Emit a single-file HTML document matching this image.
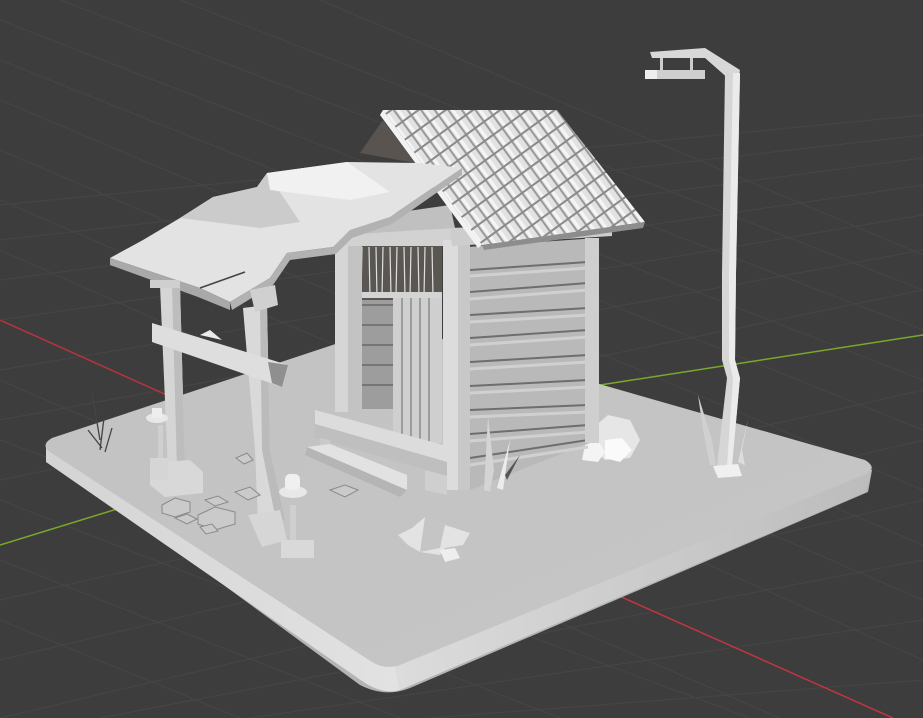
<!DOCTYPE html>
<html><head><meta charset="utf-8"><style>
html,body{margin:0;padding:0;background:#3d3d3d;overflow:hidden;width:923px;height:718px}
svg{display:block}
</style></head><body>
<svg width="923" height="718" viewBox="0 0 923 718" xmlns="http://www.w3.org/2000/svg">
<defs>
<linearGradient id="plat" x1="0" y1="0" x2="1" y2="1">
<stop offset="0" stop-color="#c2c2c2"/><stop offset="1" stop-color="#c6c6c6"/></linearGradient>
<linearGradient id="sideL" x1="0" y1="0" x2="1" y2="0">
<stop offset="0" stop-color="#d4d4d4"/><stop offset="1" stop-color="#e2e2e2"/></linearGradient>
<linearGradient id="sideR" x1="0" y1="0" x2="1" y2="0">
<stop offset="0" stop-color="#dcdcdc"/><stop offset="1" stop-color="#bcbcbc"/></linearGradient>
<pattern id="tiles" width="11" height="16" patternUnits="userSpaceOnUse" patternTransform="rotate(-36)">
<rect width="11" height="16" fill="#e2e2e2"/>
<rect x="0" y="0" width="2" height="16" fill="#9a9a9a"/>
<rect x="3" y="0" width="3" height="16" fill="#f5f5f5"/>
<rect x="0" y="14" width="11" height="2" fill="#8a8a8a"/>
</pattern>
</defs>
<rect width="923" height="718" fill="#3d3d3d"/>
<g stroke="#464646" stroke-width="1" fill="none">
<path d="M0 250 L923 660 M0 200 L923 600 M0 150 L923 545 M0 380 L923 780 M0 440 L750 718 M0 500 L560 718 M0 560 L400 718 M0 620 L240 718 M0 100 L923 490 M0 60 L923 430 M0 20 L923 380 M60 0 L923 330 M180 0 L923 290 M320 0 L923 255"/>
<path d="M0 600 L923 390 M0 660 L923 440 M0 718 L923 500 M100 718 L923 560 M250 718 L923 620 M430 718 L923 680 M0 480 L923 290 M0 420 L923 250 M0 370 L923 215 M0 320 L923 185 M0 280 L923 158 M0 240 L923 135 M0 205 L923 115"/>
</g>
<path d="M0 320 L200 410" stroke="#b8333f" stroke-width="1.5"/>
<path d="M590 583 L893 718" stroke="#c23542" stroke-width="1.5"/>
<path d="M0 545 L130 505" stroke="#7aa82a" stroke-width="1.5"/>
<path d="M600 385 L923 335" stroke="#7aa82a" stroke-width="1.5"/>
<!-- platform -->
<path d="M46 445 L60 465 L360 685 Q385 698 410 688 L868 492 L872 470 Z" fill="#b4b4b4"/>
<path d="M46 445 L46 462 L365 683 Q385 695 400 690 L395 665 Z" fill="url(#sideL)"/>
<path d="M395 665 L400 690 L866 492 L872 470 Z" fill="url(#sideR)"/>
<path d="M52 438 L393 325 L865 460 Q878 468 866 474 L400 665 Q385 670 372 662 L50 452 Q40 445 52 438 Z" fill="url(#plat)"/>
<!-- lamp post -->
<path d="M650 52 L705 48 L740 70 L738 80 L730 80 L705 58 L652 58 Z" fill="#d8d8d8"/>
<rect x="645" y="70" width="60" height="9" fill="#cfcfcf"/>
<rect x="645" y="70" width="12" height="9" fill="#eee"/>
<rect x="660" y="58" width="3" height="12" fill="#ccc"/><rect x="690" y="58" width="3" height="12" fill="#ccc"/>
<path d="M725 73 L740 73 L736 273 L735 360 L740 378 L732 466 L717 466 L727 378 L722 360 L722 273 Z" fill="#d6d6d6"/>
<path d="M733 73 L740 73 L736 273 L735 360 L740 378 L732 466 L727 466 L733 378 L729 360 L729 273 Z" fill="#ebebeb"/>
<path d="M698 395 L712 440 L716 465 L710 465 L703 430 Z" fill="#d0d0d0"/>
<path d="M748 420 L742 450 L745 465 L738 462 Z" fill="#ddd"/>
<path d="M713 466 L738 464 L742 476 L718 478 Z" fill="#f0f0f0"/>
<!-- rocks right -->
<path d="M593 428 L608 415 L630 420 L640 440 L630 458 L605 460 L595 450 Z" fill="#e6e6e6"/>
<path d="M585 445 L598 440 L605 452 L598 462 L582 460 Z" fill="#f4f4f4"/>
<path d="M605 440 L622 438 L632 450 L620 462 L605 458 Z" fill="#fafafa"/>
<!-- house right wall -->
<path d="M467 247 L598 238 L596 440 L470 490 Z" fill="#b9b9b9"/>
<g stroke="#6e6e6e" stroke-width="2">
<path d="M470 270 L588 262 M470 292 L588 283 M470 315 L588 308 M470 338 L588 330 M470 362 L588 355 M470 386 L588 380 M470 410 L588 405 M470 434 L588 425 M470 458 L588 440"/>
</g>
<g stroke="#d0d0d0" stroke-width="3">
<path d="M470 276 L588 268 M470 299 L588 290 M470 322 L588 315 M470 345 L588 337 M470 369 L588 362 M470 393 L588 387 M470 417 L588 412 M470 441 L588 432 M470 465 L588 447"/>
</g>
<rect x="585" y="238" width="14" height="205" fill="#cfcfcf"/>
<!-- front face -->
<rect x="362" y="287" width="32" height="122" fill="#9d9d9d"/>
<g stroke="#6a6a6a" stroke-width="1.5"><path d="M362 305 L394 305 M362 325 L394 325 M362 345 L394 345 M362 365 L394 365 M362 385 L394 385"/></g>
<rect x="350" y="245" width="92" height="55" fill="#5a5753"/>
<g stroke="#e0e0e0" stroke-width="1.2"><path d="M355 247 L356 296 M362 247 L361 296 M369 247 L370 296 M376 247 L377 296 M383 247 L382 296 M390 247 L391 296 M397 247 L396 296 M404 247 L405 296 M411 247 L410 296 M418 247 L419 296 M425 247 L424 296 M432 247 L433 296"/></g>
<rect x="350" y="292" width="92" height="6" fill="#d4d4d4"/>
<rect x="393" y="298" width="49" height="145" fill="#cfcfcf"/>
<g stroke="#7a7a7a" stroke-width="1.2"><path d="M402 298 L402 443 M411 298 L411 443 M420 298 L420 443 M429 298 L429 443"/></g>
<rect x="335" y="240" width="27" height="172" fill="#d6d6d6"/>
<rect x="348" y="240" width="14" height="172" fill="#c3c3c3"/>
<rect x="333" y="228" width="122" height="18" fill="#d2d2d2"/>
<rect x="443" y="240" width="27" height="250" fill="#dcdcdc"/>
<rect x="458" y="240" width="12" height="250" fill="#c8c8c8"/>
<path d="M450 228 L612 222 L612 236 L452 246 Z" fill="#cdcdcd"/>
<path d="M345 220 L450 205 L455 228 L340 235 Z" fill="#c0c0c0"/>
<!-- porch -->
<path d="M315 410 L447 446 L447 462 L315 424 Z" fill="#dcdcdc"/>
<path d="M315 424 L447 462 L447 476 L315 438 Z" fill="#bfbfbf"/>
<path d="M320 438 L330 440 L330 455 L320 452 Z" fill="#c9c9c9"/>
<path d="M425 470 L447 476 L447 495 L425 490 Z" fill="#cfcfcf"/>
<path d="M307 447 L330 444 L407 475 L407 490 Z" fill="#e2e2e2"/>
<path d="M307 447 L407 490 L400 497 L305 455 Z" fill="#b5b5b5"/>
<!-- grass near house -->
<path d="M488 416 L494 470 L490 492 L484 490 Z" fill="#d4d4d4"/>
<path d="M510 440 L503 490 L497 488 Z" fill="#ececec"/>
<path d="M520 455 L505 475 L507 480 Z" fill="#555"/>
<!-- roof -->
<path d="M360 153 L383 120 L415 163 Z" fill="#5a5450"/>
<path d="M383 110 L557 110 L645 222 L482 245 Z" fill="url(#tiles)"/>
<path d="M383 110 L482 245 L478 248 L380 115 Z" fill="#f2f2f2"/>
<path d="M482 245 L645 222 L643 228 L484 250 Z" fill="#8d8d8d"/>
<!-- awning -->
<path d="M110 258 L143 240 L180 218 L213 197 L257 187 L267 173 L347 162 L420 163 L462 168 L390 217 L350 230 L333 247 L287 253 L270 278 L230 302 L200 288 Z" fill="#e3e3e3"/>
<path d="M110 258 L200 288 L230 302 L230 310 L198 297 L110 265 Z" fill="#a9a9a9"/>
<path d="M230 302 L270 278 L287 253 L333 247 L350 230 L390 217 L462 168 L462 175 L392 224 L352 238 L336 254 L290 260 L273 285 L232 310 Z" fill="#b2b2b2"/>
<path d="M180 218 L260 228 L300 222 L267 173 L257 187 L213 197 Z" fill="#cbcbcb"/>
<path d="M270 190 L350 200 L390 192 L347 162 L267 173 Z" fill="#f1f1f1"/>
<path d="M200 288 L245 272" stroke="#444" stroke-width="1.5"/>
<!-- gate pillars -->
<path d="M160 285 L180 285 L185 470 L168 470 Z" fill="#d5d5d5"/>
<path d="M172 285 L180 285 L185 470 L177 470 Z" fill="#bdbdbd"/>
<rect x="150" y="280" width="30" height="8" fill="#cfcfcf"/>
<path d="M150 463 L190 460 L203 472 L203 493 L165 497 L150 485 Z" fill="#d8d8d8"/>
<path d="M243 308 L267 305 L270 450 L285 520 L258 522 L255 450 Z" fill="#d9d9d9"/>
<path d="M260 307 L267 305 L270 450 L285 520 L276 521 L262 450 Z" fill="#bbbbbb"/>
<path d="M250 290 L275 285 L278 305 L255 312 Z" fill="#d0d0d0"/>
<path d="M248 515 L280 510 L287 540 L262 547 Z" fill="#d6d6d6"/>
<path d="M152 323 L288 365 L282 387 L152 342 Z" fill="#dedede"/>
<path d="M268 362 L288 365 L282 387 L272 383 Z" fill="#8f8f8f"/>
<path d="M200 335 L210 330 L222 340 Z" fill="#ebebeb"/>
<!-- small lamps -->
<rect x="158" y="425" width="5" height="38" fill="#cfcfcf"/>
<rect x="150" y="458" width="18" height="22" fill="#d5d5d5"/>
<ellipse cx="157" cy="418" rx="11" ry="5" fill="#e8e8e8"/>
<rect x="152" y="408" width="10" height="10" fill="#eee"/>
<rect x="290" y="505" width="6" height="38" fill="#cfcfcf"/>
<rect x="281" y="540" width="33" height="18" fill="#d9d9d9"/>
<ellipse cx="293" cy="492" rx="14" ry="6" fill="#e8e8e8"/>
<rect x="285" y="474" width="15" height="16" rx="5" fill="#f0f0f0"/>
<!-- stepping stones -->
<g fill="#cacaca" stroke="#8a8a8a" stroke-width="1">
<path d="M162 505 L175 498 L190 502 L190 512 L175 517 L162 513 Z"/>
<path d="M198 515 L215 507 L235 512 L235 524 L215 530 L198 524 Z"/>
<path d="M175 518 L187 514 L197 519 L187 524 Z"/>
<path d="M330 490 L345 485 L358 490 L345 497 Z"/>
<path d="M235 492 L250 487 L260 495 L248 500 Z"/>
<path d="M205 500 L218 496 L228 502 L215 506 Z"/>
<path d="M200 527 L212 524 L218 531 L206 534 Z"/>
<path d="M236 458 L247 453 L253 460 L244 464 Z"/>
</g>
<!-- rock centre -->
<path d="M398 535 L412 528 L425 517 L445 525 L470 533 L463 545 L445 548 L440 555 L420 552 L408 545 Z" fill="#e3e3e3"/>
<path d="M425 517 L445 525 L440 548 L420 552 Z" fill="#c5c5c5"/>
<path d="M440 550 L455 548 L460 558 L445 562 Z" fill="#eee"/>
<!-- grass left -->
<g stroke="#444" stroke-width="1.3" fill="none"><path d="M92 393 L100 440 M104 418 L100 450 M88 430 L102 448 M112 428 L105 452"/></g>
</svg>
</body></html>
